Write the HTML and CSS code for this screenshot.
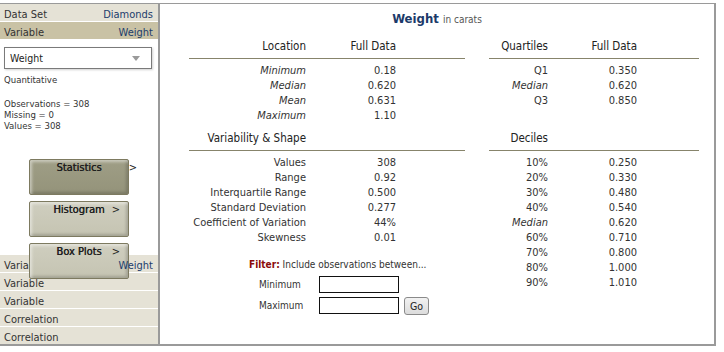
FILE: index.html
```html
<!DOCTYPE html>
<html>
<head>
<meta charset="utf-8">
<link rel="stylesheet" href="styles.css">
</head>
<body>
<div class="frame">
  <aside class="side">
    <div class="srow light top"><span>Data Set</span><span class="val">Diamonds</span></div>
    <div class="srow tan top"><span>Variable</span><span class="val">Weight</span></div>
    <div class="select"><span>Weight</span><span class="caret"></span></div>
    <p class="kind">Quantitative</p>
    <p class="counts">Observations = 308<br>Missing = 0<br>Values = 308</p>
    <div class="bottom-rows">
      <div class="srow light"><span>Variable</span><span class="val over">Weight</span></div>
      <div class="srow light"><span>Variable</span></div>
      <div class="srow light"><span>Variable</span></div>
      <div class="srow light"><span>Correlation</span></div>
      <div class="srow light"><span>Correlation</span></div>
    </div>
    <nav class="menu">
      <div class="mbtn active">Statistics<span class="arrow out">&gt;</span></div>
      <div class="mbtn">Histogram<span class="arrow">&gt;</span></div>
      <div class="mbtn">Box Plots<span class="arrow">&gt;</span></div>
    </nav>
  </aside>
  <main class="main">
    <h1 class="title">Weight <small>in carats</small></h1>
    <div class="grid">
      <section class="tbl wide">
        <div class="thead"><span>Location</span><span>Full Data</span></div>
        <div class="rows">
          <div class="r"><i>Minimum</i><span>0.18</span></div>
          <div class="r"><i>Median</i><span>0.620</span></div>
          <div class="r"><i>Mean</i><span>0.631</span></div>
          <div class="r"><i>Maximum</i><span>1.10</span></div>
        </div>
      </section>
      <section class="tbl narrow">
        <div class="thead"><span>Quartiles</span><span>Full Data</span></div>
        <div class="rows">
          <div class="r"><span>Q1</span><span>0.350</span></div>
          <div class="r"><i>Median</i><span>0.620</span></div>
          <div class="r"><span>Q3</span><span>0.850</span></div>
        </div>
      </section>
      <section class="tbl wide sec2">
        <div class="thead"><span>Variability &amp; Shape</span><span></span></div>
        <div class="rows">
          <div class="r"><span>Values</span><span>308</span></div>
          <div class="r"><span>Range</span><span>0.92</span></div>
          <div class="r"><span>Interquartile Range</span><span>0.500</span></div>
          <div class="r"><span>Standard Deviation</span><span>0.277</span></div>
          <div class="r"><span>Coefficient of Variation</span><span>44%</span></div>
          <div class="r"><span>Skewness</span><span>0.01</span></div>
        </div>
        <form class="filter">
          <p class="fline"><b>Filter:</b> Include observations between...</p>
          <div class="frow"><label>Minimum</label><input type="text"></div>
          <div class="frow"><label>Maximum</label><input type="text"><button type="button">Go</button></div>
        </form>
      </section>
      <section class="tbl narrow sec2">
        <div class="thead"><span>Deciles</span><span></span></div>
        <div class="rows">
          <div class="r"><span>10%</span><span>0.250</span></div>
          <div class="r"><span>20%</span><span>0.330</span></div>
          <div class="r"><span>30%</span><span>0.480</span></div>
          <div class="r"><span>40%</span><span>0.540</span></div>
          <div class="r"><i>Median</i><span>0.620</span></div>
          <div class="r"><span>60%</span><span>0.710</span></div>
          <div class="r"><span>70%</span><span>0.800</span></div>
          <div class="r"><span>80%</span><span>1.000</span></div>
          <div class="r"><span>90%</span><span>1.010</span></div>
        </div>
      </section>
    </div>
  </main>
</div>
</body>
</html>
```
FILE: styles.css
```css
* { box-sizing: border-box; }
body {
  margin: 0;
  background: #fff;
  font-family: "DejaVu Sans Condensed", "DejaVu Sans", sans-serif;
  font-size: 11px;
  color: #333;
}
.frame {
  display: flex;
  margin-top: 3px;
  width: 716px;
  height: 343px;
  border-top: 1px solid #9a9a9a;
  border-right: 2px solid #9a9a9a;
  border-bottom: 2px solid #9a9a9a;
}
.side {
  position: relative;
  width: 158px;
  display: flex;
  flex-direction: column;
  border-right: 2px solid #9a9a9a;
  box-sizing: content-box;
}
.srow {
  display: flex;
  justify-content: space-between;
  align-items: center;
  height: 18px;
  padding: 3px 5px 0 4px;
  font-size: 11px;
  color: #333;
}
.srow.top { border-bottom: 1px solid #fff; }
.bottom-rows .srow { border-top: 1px solid #fff; }
.light { background: #e5e2d6; }
.tan { background: #c9c2a5; }
.val { color: #1c3c6c; }
.val.over { position: relative; z-index: 3; }
.select {
  margin: 7px 6px 0 4px;
  height: 22px;
  border: 1px solid #7a7a7a;
  box-shadow: 1px 1px 2px #d0d0d0;
  display: flex;
  justify-content: space-between;
  align-items: center;
  padding: 0 11px 0 5px;
  color: #222;
  font-size: 10.5px;
}
.caret {
  width: 0; height: 0;
  border-left: 4px solid transparent;
  border-right: 4px solid transparent;
  border-top: 5px solid #9a9a9a;
}
.kind { margin: 5px 0 0 4px; line-height: 11px; font-size: 9.5px; }
.counts { margin: 13px 0 0 4px; line-height: 11px; font-size: 9.5px; }
.bottom-rows { margin-top: auto; }
.menu {
  position: absolute;
  z-index: 2;
  left: 29px;
  top: 155px;
  display: flex;
  flex-direction: column;
  gap: 6px;
}
.mbtn {
  position: relative;
  width: 100px;
  height: 36px;
  border: 1px solid #7d7a60;
  border-radius: 2px;
  background: linear-gradient(#cfcebf, #c5c4b2);
  box-shadow: inset 2px 2px 3px rgba(255,255,255,.45), inset -2px -2px 3px rgba(0,0,0,.18);
  text-align: center;
  padding-top: 1px;
  font-size: 11px;
  color: #1e1e1e;
  text-shadow: 0.3px 0 0 #1e1e1e;
}
.mbtn.active { background: linear-gradient(#9f9e86, #94937a); }
.arrow { position: absolute; right: 8px; top: 1px; text-shadow: none; }
.arrow.out { right: -9px; }
.main { flex: 1; }
.title {
  margin: 7px 0 0;
  text-align: center;
  font-size: 13px;
  line-height: 16px;
  font-weight: bold;
  color: #1c3a6a;
}
.title small { font-size: 10px; font-weight: normal; color: #555; }
.grid {
  display: grid;
  grid-template-columns: 276px 210px;
  column-gap: 24px;
  padding-left: 29px;
  margin-top: 6px;
  align-items: start;
}
.thead {
  display: grid;
  padding: 5px 0;
  line-height: 14px;
  font-size: 11.5px;
  color: #222;
  border-bottom: 1px solid #87846b;
}
.rows { padding-top: 4px; }
.r { display: grid; line-height: 15px; color: #333; }
.r i { font-style: italic; }
.thead span, .r > * { text-align: right; }
.wide .thead, .wide .r { grid-template-columns: 117px 90px; }
.narrow .thead, .narrow .r { grid-template-columns: 59px 89px; }
.sec2 { margin-top: 3px; }
.filter { margin: 13px 0 0 60px; }
.fline { margin: 0; line-height: 14px; font-size: 10px; white-space: nowrap; }
.fline b { color: #8b0a0a; font-weight: bold; }
.frow { display: flex; align-items: center; margin-top: 4px; height: 17px; font-size: 10px; }
.frow label { width: 70px; padding-left: 10px; }
.frow input {
  width: 80px; height: 17px;
  border: 1px solid #111;
  padding: 0;
  margin: 0;
}
.frow button {
  margin-left: 5px;
  width: 25px; height: 18px;
  border: 1px solid #8a8a8a;
  border-radius: 3px;
  background: linear-gradient(#f2f2f2, #dcdcdc);
  font-family: inherit;
  font-size: 10.5px;
  color: #222;
  padding: 0;
}
```
